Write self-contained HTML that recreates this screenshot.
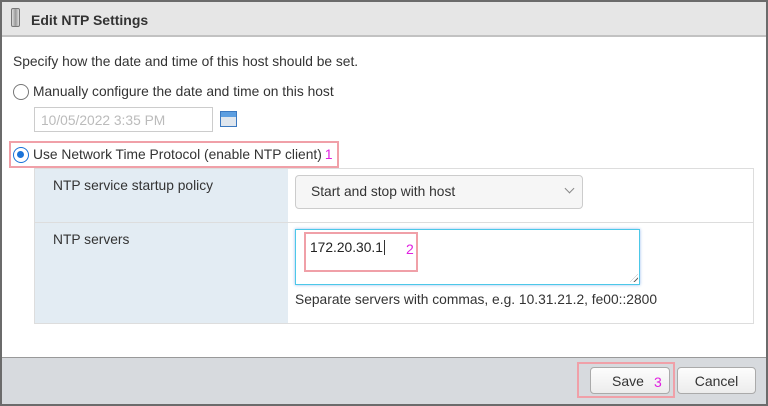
<!DOCTYPE html>
<html><head><style>
*{margin:0;padding:0;box-sizing:border-box}
body{width:768px;height:406px;overflow:hidden;background:#fff;font-family:"Liberation Sans",sans-serif;font-size:13.8px;color:#333;position:relative}
.frame{position:absolute;left:0;top:0;width:768px;height:406px;border:2px solid #6b6b6b}
.title{position:absolute;left:2px;top:2px;right:2px;height:35px;background:#e6e6e6;border-bottom:2px solid #c2c2c2}
.title span{position:absolute;left:29px;top:10px;font-weight:bold;font-size:14px;color:#333}
.ab{position:absolute}
.radio{position:absolute;width:16px;height:16px;border-radius:50%;border:1.5px solid #777;background:#fff}
.footer{position:absolute;left:2px;right:2px;top:357px;bottom:2px;background:#d7dade;border-top:1px solid #999}
.btn{position:absolute;top:367px;height:27px;border:1px solid #aaa;border-radius:4px;background:linear-gradient(#fdfdfd,#ececec);font-size:14px;color:#333;text-align:center;line-height:26px}
.pink{position:absolute;border:2px solid #f0a0a8}
.mag{position:absolute;color:#e020e0;font-size:14px}
</style></head><body>
<div class="frame"></div>
<div class="title">
 <div class="ab" style="left:9px;top:6px;width:9px;height:19px;border:1px solid #777;border-radius:2px;background:linear-gradient(90deg,#ddd,#999,#ddd)"></div>
 <span>Edit NTP Settings</span>
</div>
<div class="ab" style="left:13px;top:54px">Specify how the date and time of this host should be set.</div>
<div class="radio" style="left:13px;top:84px"></div>
<div class="ab" style="left:33px;top:84px">Manually configure the date and time on this host</div>
<div class="ab" style="left:34px;top:107px;width:179px;height:25px;border:1px solid #ccc;color:#bbb;padding:5px 0 0 6px">10/05/2022 3:35 PM</div>
<div class="ab" style="left:220px;top:111px;width:17px;height:16px;border:1px solid #3a78c0;background:linear-gradient(#5c9ee0 0 5px,#dfe6ee 5px)"></div>
<div class="pink" style="left:9px;top:141px;width:330px;height:27px"></div>
<div class="radio" style="left:13px;top:147px;border-color:#1a73d9;"><div style="position:absolute;left:3px;top:3px;width:7px;height:7px;border-radius:50%;background:#1a73d9"></div></div>
<div class="ab" style="left:33px;top:147px">Use Network Time Protocol (enable NTP client)<span style="color:#e020e0;margin-left:3px">1</span></div>
<div class="ab" style="left:34px;top:168px;width:720px;height:156px;border:1px solid #ddd"></div>
<div class="ab" style="left:35px;top:169px;width:253px;height:154px;background:#e3ecf3"></div>
<div class="ab" style="left:35px;top:222px;width:719px;height:1px;background:#ddd"></div>
<div class="ab" style="left:53px;top:178px">NTP service startup policy</div>
<div class="ab" style="left:53px;top:232px">NTP servers</div>
<div class="ab" style="left:295px;top:175px;width:288px;height:34px;border:1px solid #ccc;border-radius:4px;background:#f6f6f6;padding:8px 0 0 15px">Start and stop with host</div>
<div class="ab" style="left:566px;top:185px;width:7px;height:7px;border-right:1.2px solid #888;border-bottom:1.2px solid #888;transform:rotate(45deg)"></div>
<div class="ab" style="left:295px;top:229px;width:345px;height:56px;border:1.5px solid #4cc8e8;box-shadow:0 0 3px #9be"></div>
<div class="ab" style="left:630px;top:274px;width:8px;height:8px;background:repeating-linear-gradient(135deg,transparent 0 2px,#666 2px 3px);clip-path:polygon(100% 0,100% 100%,0 100%)"></div>
<div class="pink" style="left:304px;top:232px;width:114px;height:40px"></div>
<div class="ab" style="left:310px;top:240px;color:#222">172.20.30.1<span style="border-left:1px solid #333;margin-left:1px"></span></div>
<div class="mag" style="left:406px;top:241px">2</div>
<div class="ab" style="left:295px;top:292px">Separate servers with commas, e.g. 10.31.21.2, fe00::2800</div>
<div class="footer"></div>
<div class="btn" style="left:590px;width:80px;padding-right:4px">Save</div>
<div class="btn" style="left:677px;width:79px;">Cancel</div>
<div class="pink" style="left:577px;top:362px;width:98px;height:36px"></div>
<div class="mag" style="left:654px;top:374px">3</div>
</body></html>
